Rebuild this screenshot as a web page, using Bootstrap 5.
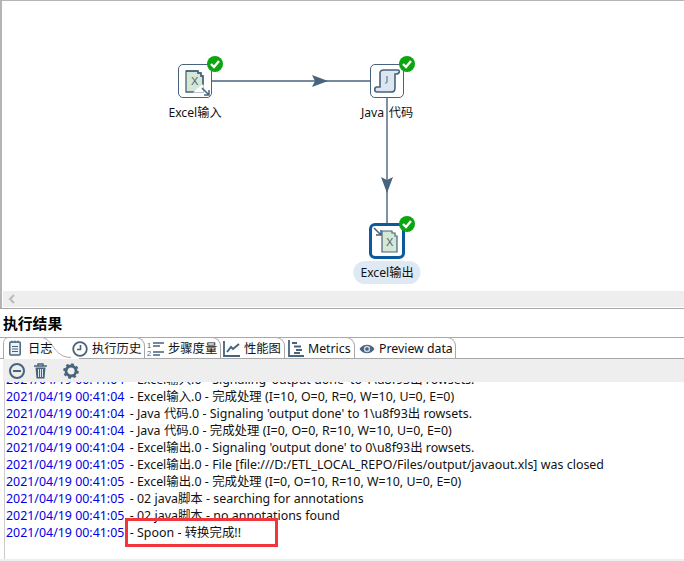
<!DOCTYPE html>
<html lang="zh"><head><meta charset="utf-8">
<link href="https://cdn.jsdelivr.net/npm/bootstrap@5.3.0/dist/css/bootstrap.min.css" rel="stylesheet">
<style>
html,body{margin:0;height:561px;width:684px;overflow:hidden;background:#fff;font-family:"Noto Sans","Noto Sans CJK SC",sans-serif;font-size:12px;color:#000}
.shell{height:561px;width:684px}
.canvas-pane{height:291px;position:relative;border-top:1px solid #b4b4b4;flex:none}
.upper-frame{border-left:2px solid #b4b4b4;flex:none}
.hscroll{height:16px;background:#eee;margin:0 0 1px 1px;padding-left:5px;flex:none}
.sep{height:1px;background:#a8a8a8;flex:none}
.res-title{height:28px;flex:none;font-size:14.8px;font-weight:700;padding:5px 0 0 3px;line-height:18px;font-family:"Noto Sans CJK SC",sans-serif;color:#000}
.tabbar{height:22px;flex:none;padding-left:3px;position:relative;border-top:1px solid #a8a8a8;border-bottom:1px solid #a8a8a8}
.tabitem{height:21px;margin-top:-1px;border:1px solid #a8a8a8;border-bottom:0;border-left:0;border-radius:0 9px 0 0;white-space:nowrap;line-height:21px;padding:1px 0 0 3px;gap:4px;font-size:12.3px;flex:none;background:#fff;color:#111}
.tabfirst{width:66px;border:0;background:none;padding-left:6px;gap:7px;position:relative;z-index:2}
.tabcurve{position:absolute;left:3px;top:-1px;z-index:1}
.tool-strip{height:23px;background:#eee;flex:none;padding:1px 0 0 6px;gap:9px;margin-left:3px}
.gear-gap{margin-left:7px}
.logbox{flex:1 1 auto;margin-left:4px;border-left:1px solid #ccc;position:relative;overflow:hidden}
.logline{height:17px;line-height:17px;white-space:nowrap;font-size:12.4px;padding-left:1px;color:#111;word-spacing:.12px}
.logline b{font-weight:400;color:#0000e6;margin-right:2px;word-spacing:0}
.clipline{margin-top:-11px}
.node{position:absolute;width:34px;height:34px;border:1px solid #48637c;border-radius:5px;background:#fff}
.node-sel{border:3.5px solid #0a5a9c;width:36px;height:36px;border-radius:6px}
.okmark{position:absolute;width:16px;height:16px}
.nlabel{position:absolute;transform:translateX(-50%);white-space:nowrap;line-height:16px;font-size:12.2px;color:#111;word-spacing:1.5px}
.nlabel-sel{background:#dfe9f4;border-radius:12px;padding:3px 7px;height:23px;line-height:17px}
.links{position:absolute;left:0;top:0}
.redbox{position:absolute;left:125px;top:518px;width:153px;height:29px;border:3px solid #f2343c;pointer-events:none}
.footgrey{height:2px;background:#eee;flex:none}
.log-flex{flex:1 1 auto;min-height:0}
</style></head>
<body>
<div class="shell d-flex flex-column position-relative">
 <div class="upper-frame">
 <div class="canvas-pane">
  <svg class="links" width="682" height="291" viewBox="2 1 682 291">
   <g stroke="#48637c" stroke-width="1.4" fill="none"><path d="M212 81H372"/><path d="M387 97V226"/></g>
   <path d="M312 75L328 81L312 87L315 81Z" fill="#48637c"/>
   <path d="M381 177L387 193L393 177L387 180Z" fill="#48637c"/>
  </svg>
  <div class="node" style="left:176px;top:63px"><svg class="d-block" width="32" height="32" viewBox="0 0 32 32"><path d="M7 6H19V8H22V11H24V27H7Z" fill="#d5e8d4" stroke="#48637c" stroke-width="1.300"/><path d="M14 27.500L24.500 18V27.500Z" fill="#fff"/><path d="M7 6H19V8H22V11H24V20" fill="none" stroke="#48637c" stroke-width="1.300"/><text x="12" y="20" font-size="11" font-family="Liberation Sans" fill="#48637c">X</text><path d="M23 23L30 30M30 25V30H25" stroke="#48637c" stroke-width="1.500" fill="none"/></svg></div>
  <div class="node" style="left:368px;top:63px"><svg class="d-block" width="32" height="32" viewBox="0 0 32 32"><path d="M9 8C9 5 11 5 13 5H27C29 5 29 9 25 9H24V23C24 27 22 27 19 27H6C3 27 3 22 6 22H9Z" fill="#dce6f0" stroke="#48637c" stroke-width="1.600"/><path d="M16 11V17C16 18 15 18 14 18" fill="none" stroke="#48637c"/></svg></div>
  <div class="node node-sel" style="left:367px;top:222px"><svg class="d-block" width="29" height="29" viewBox="0 0 29 29"><path d="M10 5H20V7H23V10H25V26H10Z" fill="#d5e8d4" stroke="#48637c" stroke-width="1.200"/><text x="14" y="20" font-size="11" font-family="Liberation Sans" fill="#48637c">X</text><path d="M2 2L9 9M9 4V9H4" stroke="#48637c" stroke-width="1.500" fill="none"/></svg></div>
  <svg class="okmark" style="left:205px;top:55px" viewBox="0 0 16 16"><circle cx="8" cy="8" r="8" fill="#0aa50f"/><path d="M4 8L7 11L12 5" stroke="#fff" stroke-width="2.400" fill="none"/></svg>
  <svg class="okmark" style="left:397px;top:55px" viewBox="0 0 16 16"><circle cx="8" cy="8" r="8" fill="#0aa50f"/><path d="M4 8L7 11L12 5" stroke="#fff" stroke-width="2.400" fill="none"/></svg>
  <svg class="okmark" style="left:397px;top:215px" viewBox="0 0 16 16"><circle cx="8" cy="8" r="8" fill="#0aa50f"/><path d="M4 8L7 11L12 5" stroke="#fff" stroke-width="2.400" fill="none"/></svg>
  <div class="nlabel" style="left:193px;top:104px">Excel输入</div>
  <div class="nlabel" style="left:385px;top:104px">Java 代码</div>
  <div class="nlabel nlabel-sel" style="left:385px;top:260px">Excel输出</div>
 </div>
 <div class="hscroll d-flex align-items-center"><svg width="7" height="10" viewBox="0 0 7 10"><path d="M6 1L2 5L6 9" stroke="#bbb" stroke-width="2" fill="none"/></svg></div>
 </div>
 <div class="sep"></div>
 <div class="res-title">执行结果</div>
 <div class="tabbar d-flex">
  <svg class="tabcurve" width="76" height="22" viewBox="0 0 76 22"><path d="M0.500 22V7C0.500 3 2 0.500 6 0.500H38C50 0.500 50 20.500 68 20.500H76V22Z" fill="#fff"/><path d="M0.500 22V7C0.500 3 2 0.500 6 0.500H38C50 0.500 50 20.500 68 20.500" fill="none" stroke="#a8a8a8"/></svg>
  <div class="tabitem tabfirst d-flex align-items-center"><svg width="12" height="16" viewBox="0 0 12 16"><rect x="0.800" y="2" width="10.400" height="13" rx="1" fill="#eef2f6" stroke="#48637c" stroke-width="1.500"/><path d="M3 0.500V3M6 0.500V3M9 0.500V3M3 6.500H9M3 9H9M3 11.500H9" stroke="#48637c"/></svg><span>日志</span></div>
  <div class="tabitem d-flex align-items-center" style="width:76px"><svg width="16" height="16" viewBox="0 0 16 16"><circle cx="8" cy="8" r="6.800" fill="none" stroke="#48637c" stroke-width="1.800"/><path d="M8.500 4V8.500H5" fill="none" stroke="#48637c" stroke-width="1.600"/></svg><span>执行历史</span></div>
  <div class="tabitem d-flex align-items-center" style="width:76px;padding-left:2px;gap:3px"><svg width="18" height="16" viewBox="0 0 18 16"><text x="0" y="7" font-size="7.500" font-family="Liberation Sans" fill="#48637c">1</text><text x="0" y="15" font-size="7.500" font-family="Liberation Sans" fill="#48637c">2</text><path d="M6 2H17M6 5H13M6 11H17M6 14H13" stroke="#48637c" stroke-width="1.300"/></svg><span>步骤度量</span></div>
  <div class="tabitem d-flex align-items-center" style="width:64px;padding-left:2px"><svg width="17" height="16" viewBox="0 0 17 16"><path d="M1 0V15H17" fill="none" stroke="#48637c" stroke-width="1.800"/><path d="M4 11L8 6L10 8L16 3" fill="none" stroke="#48637c" stroke-width="2"/></svg><span>性能图</span></div>
  <div class="tabitem d-flex align-items-center" style="width:70px"><svg width="16" height="17" viewBox="0 0 16 17"><path d="M1 0V16H16" fill="none" stroke="#48637c" stroke-width="1.800"/><path d="M4 3H9M6 6.500H13M8 10H14M6 13H12" stroke="#48637c" stroke-width="1.800"/></svg><span>Metrics</span></div>
  <div class="tabitem d-flex align-items-center" style="width:101px;padding-left:4px"><svg width="16" height="12" viewBox="0 0 17 12"><path d="M0.500 6C4 0 13 0 16.500 6C13 12 4 12 0.500 6Z" fill="#48637c"/><circle cx="8.500" cy="6" r="3.400" fill="#c8d6e2"/><circle cx="8.500" cy="6" r="1.900" fill="#48637c"/></svg><span>Preview data</span></div>
 </div>
 <div class="tool-strip d-flex align-items-center">
  <svg width="16" height="16" viewBox="0 0 16 16"><circle cx="8" cy="8" r="7" fill="none" stroke="#48637c" stroke-width="2"/><path d="M4 8H12" stroke="#48637c" stroke-width="2"/></svg>
  <svg width="13" height="16" viewBox="0 0 13 16"><path d="M0 3H13M4 3V1H9V3" fill="none" stroke="#48637c" stroke-width="1.400"/><path d="M1.500 4.500H11.500L10.500 15.500H2.500Z" fill="#48637c"/><path d="M4.500 6V14M6.500 6V14M8.500 6V14" stroke="#dfe6ec"/></svg>
  <svg class="gear-gap" width="16" height="16" viewBox="0 0 16 16"><circle cx="8" cy="8" r="5" fill="none" stroke="#48637c" stroke-width="2.800"/><circle cx="8" cy="8" r="6.800" fill="none" stroke="#48637c" stroke-width="2" stroke-dasharray="2.700 2.640"/></svg>
 </div>
 <div class="logbox log-flex">
  <div class="logline clipline"><b>2021/04/19 00:41:04</b> - Excel输入.0 - Signaling 'output done' to 1\u8f93出 rowsets.</div>
  <div class="logline"><b>2021/04/19 00:41:04</b> - Excel输入.0 - 完成处理 (I=10, O=0, R=0, W=10, U=0, E=0)</div>
  <div class="logline"><b>2021/04/19 00:41:04</b> - Java 代码.0 - Signaling 'output done' to 1\u8f93出 rowsets.</div>
  <div class="logline"><b>2021/04/19 00:41:04</b> - Java 代码.0 - 完成处理 (I=0, O=0, R=10, W=10, U=0, E=0)</div>
  <div class="logline"><b>2021/04/19 00:41:04</b> - Excel输出.0 - Signaling 'output done' to 0\u8f93出 rowsets.</div>
  <div class="logline"><b>2021/04/19 00:41:05</b> - Excel输出.0 - File [file:///D:/ETL_LOCAL_REPO/Files/output/javaout.xls] was closed</div>
  <div class="logline"><b>2021/04/19 00:41:05</b> - Excel输出.0 - 完成处理 (I=0, O=10, R=10, W=10, U=0, E=0)</div>
  <div class="logline"><b>2021/04/19 00:41:05</b> - 02 java脚本 - searching for annotations</div>
  <div class="logline"><b>2021/04/19 00:41:05</b> - 02 java脚本 - no annotations found</div>
  <div class="logline"><b>2021/04/19 00:41:05</b> - Spoon - 转换完成!!</div>
 </div>
 <div class="footgrey"></div>
 <div class="redbox"></div>
</div>
<script src="https://cdn.jsdelivr.net/npm/bootstrap@5.3.0/dist/js/bootstrap.bundle.min.js"></script>
</body></html>
